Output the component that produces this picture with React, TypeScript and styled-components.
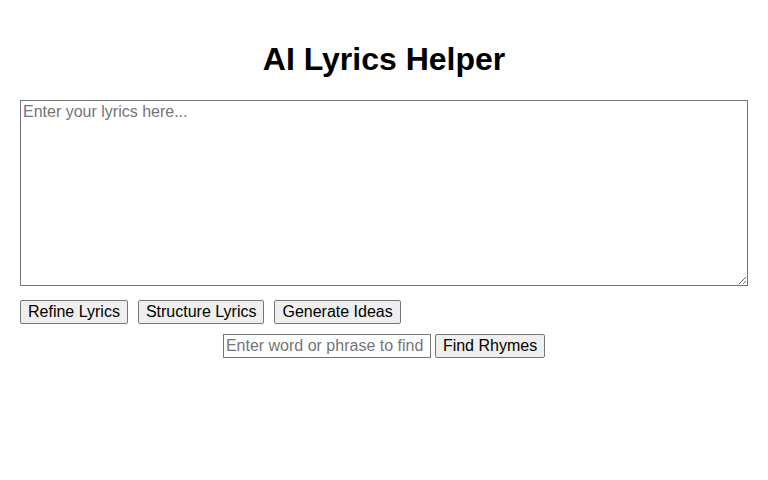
import styled, { createGlobalStyle } from "styled-components";

const GlobalStyle = createGlobalStyle`
	body {
		margin: 0;
		background: #fff;
		font-family: "Liberation Sans", Arial, sans-serif;
	}
`;

export default function App() {
	return (
		<>
			<GlobalStyle />
			<Page>
				<Title>AI Lyrics Helper</Title>
				<LyricsInput placeholder="Enter your lyrics here..." />
				<ActionRow>
					<Button>Refine Lyrics</Button>
					<Button>Structure Lyrics</Button>
					<Button>Generate Ideas</Button>
				</ActionRow>
				<RhymeRow>
					<WordInput type="text" placeholder="Enter word or phrase to find rhymes" />
					<Button>Find Rhymes</Button>
				</RhymeRow>
			</Page>
		</>
	);
}

const Page = styled.div`
	padding: 20px;
	font-family: "Liberation Sans", Arial, sans-serif;
`;

const Title = styled.h1`
	margin: 21.44px 0;
	font-size: 32px;
	font-weight: bold;
	text-align: center;
	color: #000;
`;

const LyricsInput = styled.textarea`
	display: block;
	box-sizing: border-box;
	width: 100%;
	height: 186px;
	margin: 0 0 14px;
	padding: 2px;
	border: 1px solid #767676;
	font: 16px "Liberation Sans", Arial, sans-serif;
	color: #000;

	&::placeholder {
		color: #757575;
	}
`;

const ActionRow = styled.div`
	display: flex;
	gap: 10px;
	margin-bottom: 10px;
`;

const Button = styled.button`
	box-sizing: border-box;
	height: 24px;
	padding: 1px 7px;
	border: 1px solid #767676;
	border-radius: 2px;
	background: #efefef;
	font: 16px "Liberation Sans", Arial, sans-serif;
	color: #000;
	cursor: pointer;
`;

const RhymeRow = styled.div`
	display: flex;
	justify-content: center;
	gap: 4px;
`;

const WordInput = styled.input`
	box-sizing: border-box;
	width: 208px;
	height: 24px;
	padding: 1px 2px;
	border: 1px solid #767676;
	font: 16px "Liberation Sans", Arial, sans-serif;
	color: #000;

	&::placeholder {
		color: #757575;
	}
`;
